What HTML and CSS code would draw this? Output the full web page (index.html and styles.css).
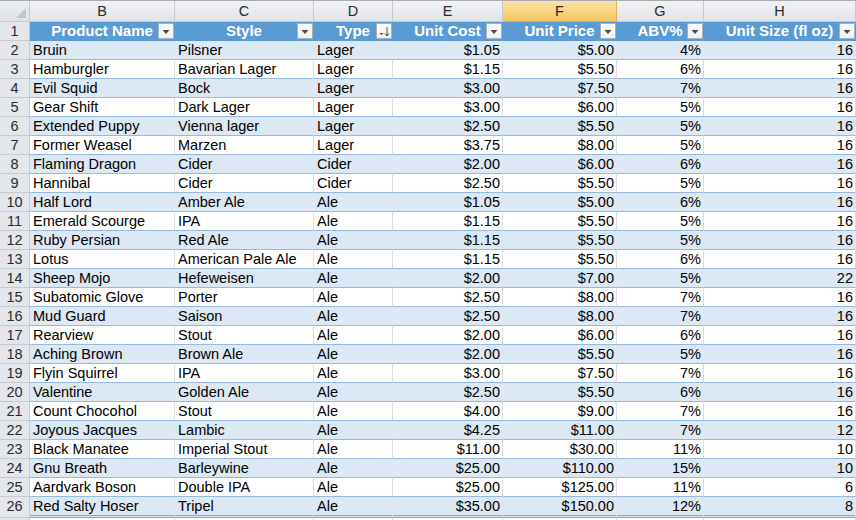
FILE: index.html
```html
<!DOCTYPE html>
<html>
<head>
<meta charset="utf-8">
<link rel="stylesheet" href="styles.css">
</head>
<body>
<div class="sheet">
  <div class="row colhead">
    <div class="corner"><svg width="10" height="10" viewBox="0 0 10 10"><path d="M10 0 L10 10 L0 10 Z" fill="#c3c6ca"/></svg></div>
    <div class="ch">B</div>
    <div class="ch">C</div>
    <div class="ch">D</div>
    <div class="ch">E</div>
    <div class="ch sel">F</div>
    <div class="ch">G</div>
    <div class="ch">H</div>
  </div>
  <div class="row thead">
    <div class="rh">1</div>
    <div class="hc"><span class="ht">Product Name</span><span class="fb"><svg width="14" height="14" viewBox="0 0 14 14"><path d="M3.5 6 L10.5 6 L7 10 Z" fill="#4a4a4a"/></svg></span></div>
    <div class="hc"><span class="ht">Style</span><span class="fb"><svg width="14" height="14" viewBox="0 0 14 14"><path d="M3.5 6 L10.5 6 L7 10 Z" fill="#4a4a4a"/></svg></span></div>
    <div class="hc"><span class="ht">Type</span><span class="fb"><svg width="14" height="14" viewBox="0 0 14 14"><path d="M2.5 9 L6.5 9 L4.5 11 Z" fill="#4a4a4a"/><path d="M10 3 L10 11.5" stroke="#4a4a4a" stroke-width="1"/><path d="M8 9.5 L10 12 L12 9.5" fill="none" stroke="#4a4a4a" stroke-width="1"/></svg></span></div>
    <div class="hc"><span class="ht">Unit Cost</span><span class="fb"><svg width="14" height="14" viewBox="0 0 14 14"><path d="M3.5 6 L10.5 6 L7 10 Z" fill="#4a4a4a"/></svg></span></div>
    <div class="hc"><span class="ht">Unit Price</span><span class="fb"><svg width="14" height="14" viewBox="0 0 14 14"><path d="M3.5 6 L10.5 6 L7 10 Z" fill="#4a4a4a"/></svg></span></div>
    <div class="hc"><span class="ht">ABV%</span><span class="fb"><svg width="14" height="14" viewBox="0 0 14 14"><path d="M3.5 6 L10.5 6 L7 10 Z" fill="#4a4a4a"/></svg></span></div>
    <div class="hc"><span class="ht">Unit Size (fl oz)</span><span class="fb"><svg width="14" height="14" viewBox="0 0 14 14"><path d="M3.5 6 L10.5 6 L7 10 Z" fill="#4a4a4a"/></svg></span></div>
  </div>

  <div class="row band"><div class="rh">2</div><div class="c">Bruin</div><div class="c">Pilsner</div><div class="c">Lager</div><div class="c n">$1.05</div><div class="c n">$5.00</div><div class="c n">4%</div><div class="c n">16</div></div>
  <div class="row"><div class="rh">3</div><div class="c">Hamburgler</div><div class="c">Bavarian Lager</div><div class="c">Lager</div><div class="c n">$1.15</div><div class="c n">$5.50</div><div class="c n">6%</div><div class="c n">16</div></div>
  <div class="row band"><div class="rh">4</div><div class="c">Evil Squid</div><div class="c">Bock</div><div class="c">Lager</div><div class="c n">$3.00</div><div class="c n">$7.50</div><div class="c n">7%</div><div class="c n">16</div></div>
  <div class="row"><div class="rh">5</div><div class="c">Gear Shift</div><div class="c">Dark Lager</div><div class="c">Lager</div><div class="c n">$3.00</div><div class="c n">$6.00</div><div class="c n">5%</div><div class="c n">16</div></div>
  <div class="row band"><div class="rh">6</div><div class="c">Extended Puppy</div><div class="c">Vienna lager</div><div class="c">Lager</div><div class="c n">$2.50</div><div class="c n">$5.50</div><div class="c n">5%</div><div class="c n">16</div></div>
  <div class="row"><div class="rh">7</div><div class="c">Former Weasel</div><div class="c">Marzen</div><div class="c">Lager</div><div class="c n">$3.75</div><div class="c n">$8.00</div><div class="c n">5%</div><div class="c n">16</div></div>
  <div class="row band"><div class="rh">8</div><div class="c">Flaming Dragon</div><div class="c">Cider</div><div class="c">Cider</div><div class="c n">$2.00</div><div class="c n">$6.00</div><div class="c n">6%</div><div class="c n">16</div></div>
  <div class="row"><div class="rh">9</div><div class="c">Hannibal</div><div class="c">Cider</div><div class="c">Cider</div><div class="c n">$2.50</div><div class="c n">$5.50</div><div class="c n">5%</div><div class="c n">16</div></div>
  <div class="row band"><div class="rh">10</div><div class="c">Half Lord</div><div class="c">Amber Ale</div><div class="c">Ale</div><div class="c n">$1.05</div><div class="c n">$5.00</div><div class="c n">6%</div><div class="c n">16</div></div>
  <div class="row"><div class="rh">11</div><div class="c">Emerald Scourge</div><div class="c">IPA</div><div class="c">Ale</div><div class="c n">$1.15</div><div class="c n">$5.50</div><div class="c n">5%</div><div class="c n">16</div></div>
  <div class="row band"><div class="rh">12</div><div class="c">Ruby Persian</div><div class="c">Red Ale</div><div class="c">Ale</div><div class="c n">$1.15</div><div class="c n">$5.50</div><div class="c n">5%</div><div class="c n">16</div></div>
  <div class="row"><div class="rh">13</div><div class="c">Lotus</div><div class="c">American Pale Ale</div><div class="c">Ale</div><div class="c n">$1.15</div><div class="c n">$5.50</div><div class="c n">6%</div><div class="c n">16</div></div>
  <div class="row band"><div class="rh">14</div><div class="c">Sheep Mojo</div><div class="c">Hefeweisen</div><div class="c">Ale</div><div class="c n">$2.00</div><div class="c n">$7.00</div><div class="c n">5%</div><div class="c n">22</div></div>
  <div class="row"><div class="rh">15</div><div class="c">Subatomic Glove</div><div class="c">Porter</div><div class="c">Ale</div><div class="c n">$2.50</div><div class="c n">$8.00</div><div class="c n">7%</div><div class="c n">16</div></div>
  <div class="row band"><div class="rh">16</div><div class="c">Mud Guard</div><div class="c">Saison</div><div class="c">Ale</div><div class="c n">$2.50</div><div class="c n">$8.00</div><div class="c n">7%</div><div class="c n">16</div></div>
  <div class="row"><div class="rh">17</div><div class="c">Rearview</div><div class="c">Stout</div><div class="c">Ale</div><div class="c n">$2.00</div><div class="c n">$6.00</div><div class="c n">6%</div><div class="c n">16</div></div>
  <div class="row band"><div class="rh">18</div><div class="c">Aching Brown</div><div class="c">Brown Ale</div><div class="c">Ale</div><div class="c n">$2.00</div><div class="c n">$5.50</div><div class="c n">5%</div><div class="c n">16</div></div>
  <div class="row"><div class="rh">19</div><div class="c">Flyin Squirrel</div><div class="c">IPA</div><div class="c">Ale</div><div class="c n">$3.00</div><div class="c n">$7.50</div><div class="c n">7%</div><div class="c n">16</div></div>
  <div class="row band"><div class="rh">20</div><div class="c">Valentine</div><div class="c">Golden Ale</div><div class="c">Ale</div><div class="c n">$2.50</div><div class="c n">$5.50</div><div class="c n">6%</div><div class="c n">16</div></div>
  <div class="row"><div class="rh">21</div><div class="c">Count Chocohol</div><div class="c">Stout</div><div class="c">Ale</div><div class="c n">$4.00</div><div class="c n">$9.00</div><div class="c n">7%</div><div class="c n">16</div></div>
  <div class="row band"><div class="rh">22</div><div class="c">Joyous Jacques</div><div class="c">Lambic</div><div class="c">Ale</div><div class="c n">$4.25</div><div class="c n">$11.00</div><div class="c n">7%</div><div class="c n">12</div></div>
  <div class="row"><div class="rh">23</div><div class="c">Black Manatee</div><div class="c">Imperial Stout</div><div class="c">Ale</div><div class="c n">$11.00</div><div class="c n">$30.00</div><div class="c n">11%</div><div class="c n">10</div></div>
  <div class="row band"><div class="rh">24</div><div class="c">Gnu Breath</div><div class="c">Barleywine</div><div class="c">Ale</div><div class="c n">$25.00</div><div class="c n">$110.00</div><div class="c n">15%</div><div class="c n">10</div></div>
  <div class="row"><div class="rh">25</div><div class="c">Aardvark Boson</div><div class="c">Double IPA</div><div class="c">Ale</div><div class="c n">$25.00</div><div class="c n">$125.00</div><div class="c n">11%</div><div class="c n">6</div></div>
  <div class="row band last"><div class="rh">26</div><div class="c">Red Salty Hoser</div><div class="c">Tripel</div><div class="c">Ale</div><div class="c n">$35.00</div><div class="c n">$150.00</div><div class="c n">12%</div><div class="c n">8</div></div>
  <div class="row empty"><div class="rh"></div><div class="c"></div><div class="c"></div><div class="c"></div><div class="c"></div><div class="c"></div><div class="c"></div><div class="c"></div></div>
</div>
</body>
</html>
```

FILE: styles.css
```css
* { box-sizing: border-box; }
html, body { margin: 0; padding: 0; background: #ffffff; }
body {
  width: 856px;
  height: 520px;
  overflow: hidden;
  font-family: "Liberation Sans", Arial, sans-serif;
  font-size: 14.5px;
  color: #000;
}
.sheet { width: 856px; }
.row {
  display: grid;
  grid-template-columns: 30px 145px 139px 79px 110px 114px 87px 152px;
  height: 19px;
}
.colhead {
  height: 22px;
  border-top: 1px solid #a9adb3;
}
.corner {
  background: linear-gradient(#eceef1, #dfe2e6);
  border-right: 1px solid #c6c9ce;
  border-bottom: 1px solid #c6c9ce;
  display: flex;
  align-items: flex-end;
  justify-content: flex-end;
  padding: 0 3px 3px 0;
}
.ch {
  background: linear-gradient(#f1f2f4, #e1e4e8);
  border-right: 1px solid #c6c9ce;
  border-bottom: 1px solid #c6c9ce;
  text-align: center;
  font-size: 14.5px;
  line-height: 20px;
  color: #2b2b2b;
}
.ch.sel {
  background: linear-gradient(#fbe3a6, #f5c862);
  border-right-color: #e2b152;
  border-bottom-color: #e0ad4b;
}
.rh {
  background: #e3e6ea;
  border-right: 1px solid #c6c9ce;
  border-bottom: 1px solid #c6c9ce;
  text-align: center;
  line-height: 18px;
  color: #2b2b2b;
  font-size: 14.5px;
}
.c {
  border-right: 1px solid #dadcdf;
  border-bottom: 1px solid #95b9e0;
  line-height: 18px;
  padding: 0 3px;
  white-space: nowrap;
  overflow: hidden;
}
.c.n { text-align: right; padding-right: 2px; }
.band .c { background: #dce8f4; border-right-color: #dce8f4; }
.band .c:last-child { border-right-color: #dce8f4; }
.thead .hc {
  background: #5b9bd5;
  border-bottom: 1px solid #5b9bd5;
  display: grid;
  align-items: center;
  padding: 0 1px 0 0;
}
.hc > * { grid-area: 1 / 1; }
.ht {
  justify-self: center;
  color: #fff;
  font-weight: bold;
  font-size: 15px;
  line-height: 18px;
  white-space: nowrap;
}
.fb {
  justify-self: end;
  width: 16px;
  height: 16px;
  border: 1px solid #a9b0b8;
  background: linear-gradient(#ffffff, #eef0f2);
  display: flex;
  align-items: center;
  justify-content: center;
}
.fb svg { display: block; }
.last { height: 21px; }
.last .c { border-bottom: 3px double #7aa8dc; }
.empty .c { background: #fff; border-bottom: none; }
.empty .rh { border-bottom: none; }
```
